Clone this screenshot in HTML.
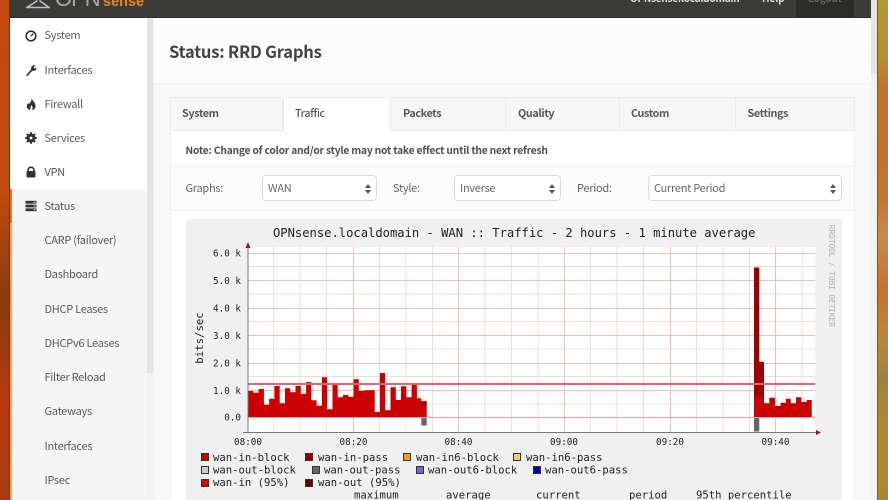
<!DOCTYPE html>
<html><head><meta charset="utf-8"><style>
html,body{margin:0;padding:0;width:888px;height:500px;overflow:hidden;background:#c9802a}
body{position:relative;font-family:"Noto Sans CJK SC","Liberation Sans",sans-serif;color:#555;-webkit-font-smoothing:antialiased}
div{position:absolute;box-sizing:border-box}
.t{white-space:nowrap;line-height:16px;font-size:11px;letter-spacing:-.27px}
.n{left:44.5px;color:#5a5a5a}
.tab{top:97px;height:34px;background:#f7f7f7;border:1px solid #ececec;border-left:0;font-size:10.8px;letter-spacing:-.4px;font-weight:600;line-height:31px;padding-left:12px;color:#585858}
.sel{top:175px;height:26px;background:#fff;border:1px solid #dcdcdc;border-radius:4px;font-size:11px;letter-spacing:-.27px;line-height:24px;padding-left:5px;color:#666}
.sel svg{position:absolute;right:4px;top:7px}
svg text{font-family:"DejaVu Sans Mono","Liberation Mono",monospace}
</style></head><body>
<div style="left:0;top:0;width:10px;height:500px;background:linear-gradient(180deg,#bf4a12 0,#c04c10 38%,#a8440f 47%,#8a3c10 60%,#9a3a10 68%,#b83a10 80%,#a83c12 100%);border-right:1.5px solid #7a2c08"></div>
<div style="left:877px;top:0;width:11px;height:500px;background:linear-gradient(180deg,#b39a30 0,#b4902e 12%,#c8702a 18%,#c5762c 40%,#c98a50 47%,#c8722a 58%,#b78a3a 68%,#a0823c 76%,#ad8a30 85%,#a98a28 100%);border-left:1px solid #7a5a1c"></div>
<div style="left:10px;top:0;width:861px;height:18px;background:#3b3b3a;border-bottom:1px solid #2f2f2f"></div>
<div style="left:796px;top:0;width:58px;height:17px;background:#2b2b2a"></div>
<div class="t" style="left:630px;top:-10px;color:#e2e2e2;font-size:10px;letter-spacing:-.25px;font-weight:600">OPNsense.localdomain</div>
<div class="t" style="left:762px;top:-10px;color:#e2e2e2;font-size:10px;letter-spacing:-.1px;font-weight:600">Help</div>
<div class="t" style="left:808px;top:-10px;color:#666;font-size:10px;letter-spacing:-.1px;font-weight:600">Logout</div>
<svg style="position:absolute;left:20px;top:0" width="40" height="18"><path d="M7 7.500L17.500 0.500M19.500 0.500L29 7.500M6 7.500H30" fill="none" stroke="#c0c0c0" stroke-width="1.500"/></svg>
<div class="t" style="left:55px;top:-14px;color:#a8a8a8;font-size:22px;line-height:26px;font-family:'Liberation Sans',sans-serif;letter-spacing:-1px">OPN</div>
<div class="t" style="left:103px;top:-8px;color:#e8881c;font-size:14.500px;line-height:20px;letter-spacing:0;font-weight:700;font-family:'Liberation Sans',sans-serif">sense</div>

<div style="left:871px;top:0;width:6px;height:500px;background:#f3f3f3"></div>
<div style="left:871px;top:0;width:6px;height:74px;background:#e4e4e4"></div>

<div style="left:10px;top:18px;width:137px;height:482px;background:#fff"></div>
<div style="left:10px;top:189px;width:137px;height:311px;background:#f5f5f5"></div>
<div style="left:9.500px;top:189px;width:2.500px;height:34px;background:#e8780f"></div>
<div style="left:9.500px;top:223px;width:2.500px;height:277px;background:#f2a65a"></div>
<div style="left:147px;top:18px;width:7px;height:482px;background:#f2f2f2"></div>
<div style="left:147px;top:18px;width:6px;height:355px;background:#e4e4e4"></div>

<svg style="position:absolute;left:24px;top:29px" width="14" height="14"><circle cx="7" cy="7" r="4.800" fill="none" stroke="#333" stroke-width="1.600"/><path d="M7 7L9.300 4.600" stroke="#333" stroke-width="1.300"/></svg>
<svg style="position:absolute;left:24px;top:63px" width="14" height="14"><path d="M2 12.200L7.200 6.300C6.600 4 8.300 1.800 11.600 2.200L9.600 4.200L10.400 5.600L12.300 4.500C12.600 7 10.500 8.600 8.300 7.700L3.200 13.300Z" fill="#333"/></svg>
<svg style="position:absolute;left:24px;top:97px" width="14" height="14"><path d="M7.600 1C8 3.500 11.500 5 11.500 9C11.500 11.500 9.800 13 7.800 13C9 11.500 8.800 9.500 7.400 8C7 9.500 6 10 6.400 13C4 12.600 2.500 11 2.800 8.600C3 7.400 3.600 6.800 4.300 5.800L4.800 7.200C6.400 5.600 7.800 3.600 7.600 1Z" fill="#333"/></svg>
<svg style="position:absolute;left:24px;top:131px" width="14" height="14"><circle cx="7" cy="7" r="3.300" fill="none" stroke="#333" stroke-width="2.400"/><path d="M7 1.200V12.800M1.200 7H12.800M2.900 2.900L11.100 11.100M11.100 2.900L2.900 11.100" stroke="#333" stroke-width="2"/><circle cx="7" cy="7" r="1.400" fill="#fff"/></svg>
<svg style="position:absolute;left:24px;top:165px" width="14" height="14"><path d="M4.200 6.500V4.600C4.200 1.500 9.800 1.500 9.800 4.600V6.500" fill="none" stroke="#333" stroke-width="1.600"/><rect x="2.500" y="6" width="9" height="6.500" rx="1" fill="#333"/></svg>
<svg style="position:absolute;left:24px;top:199px" width="14" height="14"><rect x="1.500" y="1.800" width="11" height="2.800" fill="#333"/><rect x="1.500" y="5.600" width="11" height="2.800" fill="#333"/><rect x="1.500" y="9.400" width="11" height="2.800" fill="#333"/><path d="M9.500 3.200H11.500M9.500 7H11.500M9.500 10.800H11.500" stroke="#f5f5f5" stroke-width=".8"/></svg>

<div class="t n" style="top:27px">System</div>
<div class="t n" style="top:61.500px">Interfaces</div>
<div class="t n" style="top:95.500px">Firewall</div>
<div class="t n" style="top:130px">Services</div>
<div class="t n" style="top:164px">VPN</div>
<div class="t n" style="top:198px">Status</div>
<div class="t n" style="top:232px">CARP (failover)</div>
<div class="t n" style="top:266px">Dashboard</div>
<div class="t n" style="top:301px">DHCP Leases</div>
<div class="t n" style="top:335px">DHCPv6 Leases</div>
<div class="t n" style="top:369px">Filter Reload</div>
<div class="t n" style="top:403px">Gateways</div>
<div class="t n" style="top:437.500px">Interfaces</div>
<div class="t n" style="top:471.500px">IPsec</div>

<div style="left:154px;top:18px;width:717px;height:482px;background:#f8f8f8"></div>
<div style="left:154px;top:18px;width:717px;height:66px;background:#fcfcfc;border-bottom:1px solid #eee"></div>
<div class="t" style="left:169px;top:39px;font-size:16.500px;letter-spacing:-.2px;line-height:24px;font-weight:600;color:#444">Status: RRD Graphs</div>

<div style="left:170px;top:130px;width:685px;height:370px;background:#fff;border-left:1px solid #eee;border-right:1px solid #eee"></div>
<div class="tab" style="left:170px;width:113px;border-left:1px solid #ececec;padding-left:11px">System</div>
<div class="tab" style="left:283px;width:108px;background:#fff;border-bottom:0;border-left:1px solid #ececec;font-weight:500;padding-left:11px">Traffic</div>
<div class="tab" style="left:391px;width:115px">Packets</div>
<div class="tab" style="left:506px;width:114px">Quality</div>
<div class="tab" style="left:620px;width:116px;padding-left:11px">Custom</div>
<div class="tab" style="left:736px;width:119px;padding-left:11.500px">Settings</div>

<div class="t" style="left:185.500px;top:142px;font-size:10.200px;letter-spacing:-.17px;font-weight:600;color:#4d4d4d">Note: Change of color and/or style may not take effect until the next refresh</div>
<div style="left:171px;top:166px;width:683px;height:45px;background:#fbfbfb;border-top:1px solid #eee;border-bottom:1px solid #eee"></div>
<div class="t" style="left:185.500px;top:180px;color:#666">Graphs:</div>
<div class="t" style="left:393px;top:180px;color:#666">Style:</div>
<div class="t" style="left:577px;top:180px;color:#666">Period:</div>
<div class="sel" style="left:262px;width:115px">WAN<svg width="8" height="12"><path d="M4 1L7 5H1ZM4 11L1 7H7Z" fill="#555"/></svg></div>
<div class="sel" style="left:454px;width:107px">Inverse<svg width="8" height="12"><path d="M4 1L7 5H1ZM4 11L1 7H7Z" fill="#555"/></svg></div>
<div class="sel" style="left:648px;width:194px">Current Period<svg width="8" height="12"><path d="M4 1L7 5H1ZM4 11L1 7H7Z" fill="#555"/></svg></div>

<svg style="position:absolute;left:186px;top:219px" width="656" height="281" viewBox="186 219 656 281">
<rect x="186" y="219" width="656" height="281" fill="#f0f0f0"/>
<rect x="248" y="247" width="567" height="185" fill="#fff"/>
<g stroke="#efdcdc" stroke-width="1"><path d="M248 266.500H815M248 294H815M248 321.500H815M248 349H815M248 376.500H815M248 404H815"/><path d="M273.500 247V432M300 247V432M326.500 247V432M379.500 247V432M406 247V432M432.500 247V432M485 247V432M511.500 247V432M538 247V432M590.500 247V432M617 247V432M643.500 247V432M696.500 247V432M723 247V432M749.500 247V432M802 247V432"/></g>
<g stroke="#f5bcbc" stroke-width="1"><path d="M248 253.500H815M248 280.500H815M248 308.500H815M248 335.500H815M248 363.500H815M248 390.500H815"/><path d="M353.500 247V432M458.500 247V432M564.500 247V432M670.500 247V432M775.500 247V432"/></g>
<path fill="#cc0000" d="M248 417V391H253.300V392.700H258.600V389H263.900V404.700H269.100V398.700H274.400V386H279.700V403.300H285V388.300H290.200V392.300H295.500V386H300.800V393.700H306.100V382H311.300V400.300H316.600V405.700H321.900V377.300H327.200V409.300H332.500V384H337.700V397.300H343V395H348.300V396.700H353.600V379.300H358.800V391H364.100V390.300H369.400V390.300H374.700V412H379.900V373H385.200V410.300H390.500V387.300H395.800V400H401V386.300H406.300V397.300H411.600V383.700H416.900V398.300H421.300V401.300H426.700V417Z"/>
<rect x="421.300" y="401.300" width="5.400" height="5" fill="#a80000"/>
<rect x="421.300" y="417" width="5.400" height="8.500" fill="#666"/>
<path fill="#cc0000" d="M754 417V397H764V403.300H769.300V397.700H775V406H780.500V402.700H786V398.700H790.700V403.300H796V397.300H801.300V402H806.700V400H811.700V417Z"/>
<path fill="#a00000" d="M754 267.500H759.300V361.700H764V397H754Z"/>
<rect x="754" y="417" width="5.300" height="14.500" fill="#666"/>
<rect x="248" y="383" width="567" height="2" fill="#e2666a"/>
<path d="M248 417.500H815" stroke="#e8a0a0" stroke-width="1"/>
<path d="M248 432.500V246M243 432.500H818" stroke="#777" stroke-width="1" fill="none"/>
<path d="M248 242L245.500 248H250.500ZM821 432.500L816 430V435Z" fill="#8b1a1a"/>
<g font-size="9.300" fill="#222" text-anchor="end"><text x="241" y="256.500">6.0 k</text><text x="241" y="284">5.0 k</text><text x="241" y="311.500">4.0 k</text><text x="241" y="339">3.0 k</text><text x="241" y="366.500">2.0 k</text><text x="241" y="394">1.0 k</text><text x="241" y="420.500">0.0</text></g>
<g font-size="9.300" fill="#222" text-anchor="middle"><text x="248" y="445">08:00</text><text x="353.500" y="445">08:20</text><text x="458.500" y="445">08:40</text><text x="564" y="445">09:00</text><text x="670" y="445">09:20</text><text x="775.500" y="445">09:40</text></g>
<text x="273" y="237" font-size="12.150" fill="#222">OPNsense.localdomain - WAN :: Traffic - 2 hours - 1 minute average</text>
<text transform="translate(203 338) rotate(-90)" text-anchor="middle" font-size="10.700" fill="#222">bits/sec</text>
<text transform="translate(829 225) rotate(90)" font-size="7.700" fill="#b0b0b0">RRDTOOL / TOBI OETIKER</text>
<g stroke="#333" stroke-width="1">
<rect x="201.500" y="453.500" width="7" height="7" fill="#cc0000"/><rect x="305.500" y="453.500" width="7" height="7" fill="#990000"/><rect x="403.500" y="453.500" width="7" height="7" fill="#f0a000"/><rect x="513.500" y="453.500" width="7" height="7" fill="#f8c870"/>
<rect x="201.500" y="466.500" width="7" height="7" fill="#ccc"/><rect x="312.500" y="466.500" width="7" height="7" fill="#666"/><rect x="416.500" y="466.500" width="7" height="7" fill="#6666ee"/><rect x="533.500" y="466.500" width="7" height="7" fill="#0000aa"/>
<rect x="201.500" y="479.500" width="7" height="7" fill="#e00000"/><rect x="305.500" y="479.500" width="7" height="7" fill="#660000"/>
</g>
<g font-size="10.600" fill="#222">
<text x="213" y="461">wan-in-block</text><text x="318" y="461">wan-in-pass</text><text x="416" y="461">wan-in6-block</text><text x="526" y="461">wan-in6-pass</text>
<text x="213" y="473.500">wan-out-block</text><text x="324" y="473.500">wan-out-pass</text><text x="428" y="473.500">wan-out6-block</text><text x="545" y="473.500">wan-out6-pass</text>
<text x="213" y="486">wan-in (95%)</text><text x="318" y="486">wan-out (95%)</text>
<text x="354" y="498.500">maximum</text><text x="446" y="498.500">average</text><text x="536" y="498.500">current</text><text x="629" y="498.500">period</text><text x="696" y="498.500">95th percentile</text>
</g>
</svg>
</body></html>
